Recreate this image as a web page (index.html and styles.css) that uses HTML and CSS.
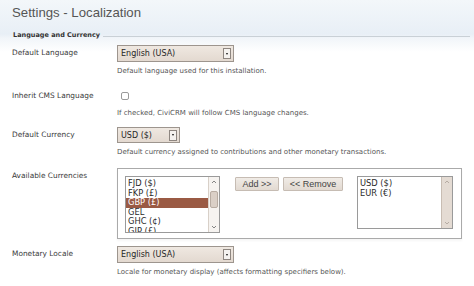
FILE: index.html
```html
<!DOCTYPE html>
<html lang="en">
<head>
	<meta charset="UTF-8">
	<title>Settings - Localization</title>
	<link rel="stylesheet" href="styles.css">
</head>
<body>
	<div class="page">
		<!-- 标题 -->
		<div class="head"><h1>Settings - Localization</h1></div>
		<div class="legend"><span>Language and Currency</span></div>

		<div class="row first">
			<div class="label">Default Language</div>
			<div class="field">
				<div class="select wide"><span class="val">English (USA)</span><span class="arrow"></span></div>
				<div class="help">Default language used for this installation.</div>
			</div>
		</div>

		<div class="row r_check">
			<div class="label check_label">Inherit CMS Language</div>
			<div class="field">
				<div class="check_line"><span class="checkbox"></span></div>
				<div class="help">If checked, CiviCRM will follow CMS language changes.</div>
			</div>
		</div>

		<div class="row r_currency">
			<div class="label short_label">Default Currency</div>
			<div class="field">
				<div class="select short"><span class="val">USD ($)</span><span class="arrow"></span></div>
				<div class="help">Default currency assigned to contributions and other monetary transactions.</div>
			</div>
		</div>

		<div class="row r_picker">
			<div class="label top_label">Available Currencies</div>
			<div class="field">
				<div class="picker">
					<div class="listbox left_list">
						<div class="items">
							<div>FJD ($)</div>
							<div>FKP (£)</div>
							<div class="sel">GBP (£)</div>
							<div>GEL</div>
							<div>GHC (¢)</div>
							<div>GIP (£)</div>
						</div>
						<div class="scroll">
							<svg class="up" width="6" height="4" viewBox="0 0 6 4"><polyline points="1,3 3,1 5,3" fill="none" stroke="#777" stroke-width="0.9"/></svg>
							<div class="thumb"></div>
							<svg class="down" width="6" height="4" viewBox="0 0 6 4"><polyline points="1,1 3,3 5,1" fill="none" stroke="#777" stroke-width="0.9"/></svg>
						</div>
					</div>
					<div class="buttons">
						<button class="btn add">Add &gt;&gt;</button>
						<button class="btn remove">&lt;&lt; Remove</button>
					</div>
					<div class="listbox right_list">
						<div class="items">
							<div>USD ($)</div>
							<div>EUR (€)</div>
						</div>
						<div class="scroll off">
							<svg class="up" width="6" height="4" viewBox="0 0 6 4"><polyline points="1,3 3,1 5,3" fill="none" stroke="#b0a69d" stroke-width="0.9"/></svg>
							<svg class="down" width="6" height="4" viewBox="0 0 6 4"><polyline points="1,1 3,3 5,1" fill="none" stroke="#b0a69d" stroke-width="0.9"/></svg>
						</div>
					</div>
				</div>
			</div>
		</div>

		<div class="row last">
			<div class="label">Monetary Locale</div>
			<div class="field">
				<div class="select wide"><span class="val">English (USA)</span><span class="arrow"></span></div>
				<div class="help">Locale for monetary display (affects formatting specifiers below).</div>
			</div>
		</div>
	</div>
</body>
</html>
```

FILE: styles.css
```css
	body{
		margin:0;
		background:#fff;
		font-family:"DejaVu Sans",Verdana,sans-serif;
		color:#333;
	}
	.page{
		width:474px;
		height:286px;
		overflow:hidden;
		background:linear-gradient(#f3f7fa 0,#e8eff6 34px,#f1f5f9 38px,#fff 52px);
	}
	.head{
		height:26px;
		padding-left:12px;
	}
	.head h1{
		margin:0;
		font-family:"Liberation Sans",Arial,sans-serif;
		font-weight:normal;
		font-size:13.2px;
		line-height:26px;
		color:#555;
	}
	.legend{
		display:flex;
		align-items:center;
		height:10px;
		margin-top:4px;
		padding-left:13px;
		width:457px;
	}
	.legend span{
		font-weight:bold;
		font-size:6.5px;
		line-height:10px;
		color:#333;
	}
	.legend::after{
		content:"";
		flex:1;
		height:1px;
		margin:2px 0 0 3px;
		background:#c9d0d6;
	}
	.row{
		display:grid;
		grid-template-columns:105px auto;
		padding-left:12px;
		margin-top:9px;
	}
	.row.first{
		margin-top:5px;
	}
	.row.r_check{
		margin-top:10px;
	}
	.row.r_currency{
		margin-top:8px;
	}
	.row.r_picker{
		margin-top:10px;
	}
	.row.last{
		margin-top:7px;
	}
	.label{
		font-size:7.4px;
		line-height:15px;
		color:#3a3a3a;
	}
	.check_label{
		line-height:17px;
	}
	.top_label{
		line-height:11px;
		padding-top:2px;
	}
	.select{
		display:flex;
		align-items:center;
		box-sizing:border-box;
		height:17px;
		border:1px solid #9d958e;
		background:linear-gradient(#efe8e1,#e3d9d0);
	}
	.select.wide{
		width:117px;
	}
	.select.short{
		width:63px;
		height:16px;
	}
	.val{
		flex:1;
		padding-left:3px;
		font-size:8px;
		color:#262626;
	}
	.arrow{
		display:flex;
		align-items:center;
		justify-content:center;
		box-sizing:border-box;
		width:8px;
		height:11px;
		margin-right:2px;
		border:1px solid #8e8680;
		background:#f5f2ef;
	}
	.arrow::after{
		content:"";
		border-left:1.5px solid transparent;
		border-right:1.5px solid transparent;
		border-top:2px solid #111;
	}
	.help{
		margin-top:4px;
		font-size:7px;
		line-height:11px;
		color:#555;
	}
	.check_line{
		display:flex;
		align-items:center;
		height:17px;
		padding-left:4px;
	}
	.checkbox{
		box-sizing:border-box;
		width:8px;
		height:8px;
		border:1px solid #9a9a9a;
		border-radius:2px;
		background:#fff;
	}
	.picker{
		display:flex;
		align-items:flex-start;
		box-sizing:border-box;
		width:345px;
		height:71px;
		padding:7px 8px 0 7px;
		border:1px solid #aaa;
		background:#fff;
		box-shadow:0 2px 2px rgba(0,0,0,0.04);
	}
	.listbox{
		display:flex;
		box-sizing:border-box;
		border:1px solid #9a9a9a;
		background:#fff;
		overflow:hidden;
	}
	.left_list{
		width:95px;
		height:57px;
	}
	.right_list{
		width:96px;
		height:53px;
		margin-left:auto;
	}
	.items{
		flex:1;
		padding-top:2px;
		font-size:8.3px;
		line-height:9.6px;
		color:#2a2a2a;
	}
	.items div{
		padding-left:2px;
		white-space:nowrap;
	}
	.items .sel{
		background:#9a5a44;
		color:#fff;
	}
	.scroll{
		display:flex;
		flex-direction:column;
		align-items:center;
		width:10px;
		border-left:1px solid #d8d0c8;
		background:#f6f3f0;
	}
	.scroll.off{
		background:#e4dbd3;
		border-left-color:#c8bdb3;
	}
	.scroll .up{
		margin-top:3px;
	}
	.scroll .down{
		margin-top:auto;
		margin-bottom:3px;
	}
	.thumb{
		box-sizing:border-box;
		width:8px;
		height:17px;
		margin-top:7px;
		border:1px solid #b8aca2;
		border-radius:2px;
		background:#dacfc6;
	}
	.buttons{
		display:flex;
		gap:4px;
		margin:1px 0 0 15px;
	}
	.btn{
		box-sizing:border-box;
		height:14px;
		padding:0;
		font-family:"Liberation Sans",Arial,sans-serif;
		font-size:9px;
		line-height:12px;
		color:#444;
		border:1px solid #c6bcb3;
		border-radius:1px;
		background:linear-gradient(#f0ebe6,#e2d9d1);
	}
	.btn.add{
		width:44px;
	}
	.btn.remove{
		width:60px;
	}
```
